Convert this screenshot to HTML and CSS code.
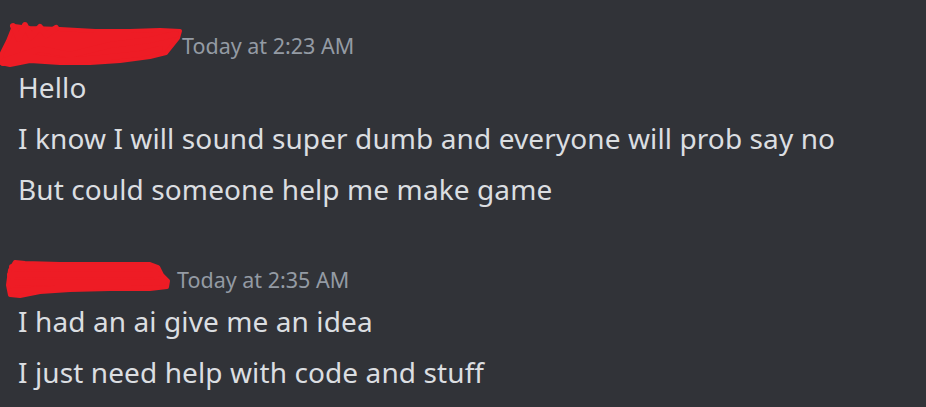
FILE: index.html
```html
<!DOCTYPE html>
<html lang="en">
<head>
<meta charset="utf-8">
<title>Chat</title>
<link rel="stylesheet" href="styles.css">
</head>
<body>
<main class="chat">
  <section class="group">
    <header class="group-header">
      <svg class="redact" width="182" height="50" viewBox="0 -10 182 50" aria-label="redacted name">
        <path class="fill" d="M14 -5 L30 -3 L60 -2 L95 0 L130 0 L160 -1 L180 0 L178 7 L166 22 L150 26 L120 30 L90 32 L60 32 L30 30 L10 34 L1 32 L2 22 L8 10 Z" />
        <path class="scrawl" d="M13 -5 L19 8 L25 -6 L31 6 L40 -4 L46 4 L56 -3 M4 30 L40 18 L70 24 L110 14 L150 9 L176 3 M3 32 L30 26 L64 30 L100 27 L140 23 L160 18" />
      </svg>
      <span class="timestamp">Today at 2:23 AM</span>
    </header>
    <p class="message">Hello</p>
    <p class="message">I know I will sound super dumb and everyone will prob say no</p>
    <p class="message">But could someone help me make game</p>
  </section>
  <section class="group">
    <header class="group-header">
      <svg class="redact" width="177" height="42" viewBox="0 -6 177 42" aria-label="redacted name">
        <path class="fill" d="M15 -3 L25 -2 L60 -1 L100 -1 L150 -1 L158 2 L162 10 L168 16 L167 22 L150 24 L110 24 L70 25 L40 27 L20 31 L10 30 L8 20 L10 5 Z" />
        <path class="scrawl" d="M12 2 L150 1 M10 10 L158 9 M10 18 L164 17 M12 26 L90 22 L160 21" />
      </svg>
      <span class="timestamp">Today at 2:35 AM</span>
    </header>
    <p class="message">I had an ai give me an idea</p>
    <p class="message">I just need help with code and stuff</p>
  </section>
</main>
</body>
</html>
```
FILE: styles.css
```css
html, body {
  margin: 0;
  padding: 0;
  background: #313338;
}
body {
  width: 926px;
  height: 407px;
  overflow: hidden;
  font-family: "Noto Sans", "Open Sans", sans-serif;
}
.chat {
  display: flex;
  flex-direction: column;
  padding-top: 31px;
}
.group {
  display: flex;
  flex-direction: column;
}
.group + .group {
  margin-top: 50px;
}
.group-header {
  display: flex;
  align-items: center;
  height: 30px;
  margin-bottom: 1px;
}
.redact {
  flex: none;
}
.redact .fill {
  fill: #ee1c25;
  stroke: #ee1c25;
  stroke-width: 4;
  stroke-linejoin: round;
}
.redact .scrawl {
  fill: none;
  stroke: #ee1c25;
  stroke-width: 6;
  stroke-linecap: round;
  stroke-linejoin: round;
}
.timestamp {
  font-size: 21.5px;
  line-height: 30px;
  color: #949ba4;
  white-space: nowrap;
}
.message {
  margin: 0;
  padding-left: 18px;
  font-size: 28px;
  letter-spacing: 0.1px;
  line-height: 51px;
  color: #dbdee1;
  white-space: nowrap;
}
```
